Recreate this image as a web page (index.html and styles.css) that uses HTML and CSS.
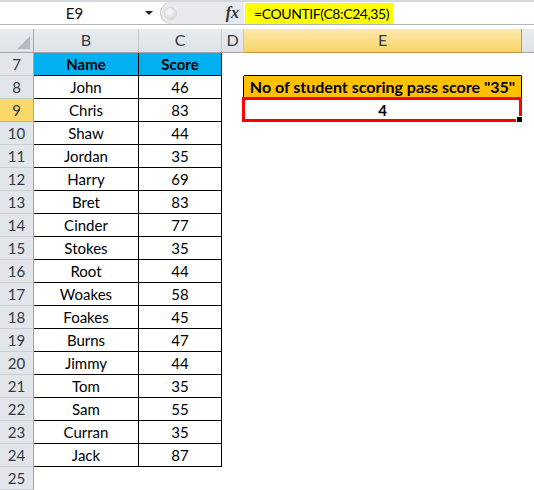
FILE: index.html
```html
<!DOCTYPE html>
<html lang="en">
  <head>
    <meta charset="UTF-8" />
    <title>COUNTIF</title>
    <link rel="stylesheet" href="styles.css">
  </head>
  <body>
    <div class="formula-bar">
      <div class="name-box">
        <span class="name">E9</span>
        <span class="arrow"></span>
      </div>
      <div class="fx-area">
        <span class="knob"></span>
        <span class="fx">fx</span>
      </div>
      <div class="formula"><span class="mark">=COUNTIF(C8:C24,35)</span></div>
    </div>

    <div class="sheet">
      <div class="hd corner"></div>
      <div class="hd col">B</div>
      <div class="hd col">C</div>
      <div class="hd col">D</div>
      <div class="hd col sel">E</div>
      <div class="hd col end"></div>

      <div class="hd row">7</div>
      <div class="c t head">Name</div>
      <div class="c t head">Score</div>
      <div class="c"></div>
      <div class="c line-b"></div>
      <div class="c"></div>

      <div class="hd row">8</div>
      <div class="c t">John</div>
      <div class="c t">46</div>
      <div class="c line-r"></div>
      <div class="c label">No of student scoring pass score "35"</div>
      <div class="c"></div>

      <div class="hd row sel">9</div>
      <div class="c t">Chris</div>
      <div class="c t">83</div>
      <div class="c"></div>
      <div class="c result">4<span class="select-box"></span></div>
      <div class="c"></div>

      <div class="hd row">10</div>
      <div class="c t">Shaw</div>
      <div class="c t">44</div>
      <div class="c"></div><div class="c"></div><div class="c"></div>

      <div class="hd row">11</div>
      <div class="c t">Jordan</div>
      <div class="c t">35</div>
      <div class="c"></div><div class="c"></div><div class="c"></div>

      <div class="hd row">12</div>
      <div class="c t">Harry</div>
      <div class="c t">69</div>
      <div class="c"></div><div class="c"></div><div class="c"></div>

      <div class="hd row">13</div>
      <div class="c t">Bret</div>
      <div class="c t">83</div>
      <div class="c"></div><div class="c"></div><div class="c"></div>

      <div class="hd row">14</div>
      <div class="c t">Cinder</div>
      <div class="c t">77</div>
      <div class="c"></div><div class="c"></div><div class="c"></div>

      <div class="hd row">15</div>
      <div class="c t">Stokes</div>
      <div class="c t">35</div>
      <div class="c"></div><div class="c"></div><div class="c"></div>

      <div class="hd row">16</div>
      <div class="c t">Root</div>
      <div class="c t">44</div>
      <div class="c"></div><div class="c"></div><div class="c"></div>

      <div class="hd row">17</div>
      <div class="c t">Woakes</div>
      <div class="c t">58</div>
      <div class="c"></div><div class="c"></div><div class="c"></div>

      <div class="hd row">18</div>
      <div class="c t">Foakes</div>
      <div class="c t">45</div>
      <div class="c"></div><div class="c"></div><div class="c"></div>

      <div class="hd row">19</div>
      <div class="c t">Burns</div>
      <div class="c t">47</div>
      <div class="c"></div><div class="c"></div><div class="c"></div>

      <div class="hd row">20</div>
      <div class="c t">Jimmy</div>
      <div class="c t">44</div>
      <div class="c"></div><div class="c"></div><div class="c"></div>

      <div class="hd row">21</div>
      <div class="c t">Tom</div>
      <div class="c t">35</div>
      <div class="c"></div><div class="c"></div><div class="c"></div>

      <div class="hd row">22</div>
      <div class="c t">Sam</div>
      <div class="c t">55</div>
      <div class="c"></div><div class="c"></div><div class="c"></div>

      <div class="hd row">23</div>
      <div class="c t">Curran</div>
      <div class="c t">35</div>
      <div class="c"></div><div class="c"></div><div class="c"></div>

      <div class="hd row">24</div>
      <div class="c t">Jack</div>
      <div class="c t">87</div>
      <div class="c"></div><div class="c"></div><div class="c"></div>

      <div class="hd row">25</div>
      <div class="c"></div><div class="c"></div>
      <div class="c"></div><div class="c"></div><div class="c"></div>
    </div>
  </body>
</html>
```

FILE: styles.css
```css
body {
  margin: 0;
  width: 534px;
  height: 490px;
  overflow: hidden;
  background-color: #fff;
  font-family: Lato, "Open Sans", sans-serif;
  font-size: 15px;
  color: #000;
}

/* formula bar */
.formula-bar {
  display: flex;
  height: 22px;
  border-top: 2px solid #d5d8dc;
  border-bottom: 1px solid #b4b8bd;
  margin-bottom: 4px;
}
.name-box {
  width: 157px;
  display: flex;
  align-items: center;
}
.name {
  flex: 1;
  text-align: center;
  padding-left: 4px;
  color: #111;
}
.arrow {
  width: 0;
  height: 0;
  margin-right: 4px;
  border-left: 4px solid transparent;
  border-right: 4px solid transparent;
  border-top: 4px solid #222;
}
.fx-area {
  width: 84px;
  margin-left: 3px;
  display: flex;
  align-items: center;
  justify-content: space-between;
  background-color: #e7e9ec;
  border-radius: 11px 0 0 11px;
  box-shadow: inset 1px 0 0 #c9ccd0;
}
.knob {
  width: 11px;
  height: 11px;
  margin-left: 5px;
  border-radius: 50%;
  background: radial-gradient(circle at 40% 35%, #fdfdfd, #c9ccd0);
  box-shadow: 0 0 0 1px #d3d6da;
}
.fx {
  margin-right: 5px;
  font-family: "Liberation Serif", serif;
  font-style: italic;
  font-weight: bold;
  font-size: 16px;
  color: #333;
}
.formula {
  flex: 1;
  display: flex;
  padding-top: 1px;
  padding-left: 1px;
}
.mark {
  background-color: #ffff00;
  padding: 0 4px 0 9px;
  font-size: 14px;
  letter-spacing: -0.4px;
  line-height: 21px;
}

/* sheet */
.sheet {
  display: grid;
  grid-template-columns: 34px 105px 83px 22px 278px 12px;
  grid-template-rows: 24px;
  grid-auto-rows: 23px;
}
.hd {
  box-sizing: border-box;
  background: linear-gradient(#e9ecf0, #dfe3e8);
  border-right: 1px solid #c3c8cf;
  border-bottom: 1px solid #9ea5ae;
  color: #333a44;
  text-align: center;
  line-height: 22px;
  font-size: 16px;
}
.corner {
  position: relative;
  border-right-color: #9ea5ae;
}
.corner::after {
  content: "";
  position: absolute;
  right: 3px;
  bottom: 3px;
  border-left: 13px solid transparent;
  border-bottom: 13px solid #b7bcc3;
}
.col.sel {
  background: linear-gradient(#fce9ab, #f9d467);
  border-right-color: #c99544;
  border-bottom-color: #c99544;
}
.col.end {
  border-right: none;
}
.row {
  background: #e2e5ea;
  border-right-color: #9ea5ae;
  border-bottom-color: #c9ced5;
  font-size: 15px;
}
.row.sel {
  background: #fcd86b;
  border-bottom-color: #e0a84a;
  border-right-color: #d49a3d;
}

.c {
  box-sizing: border-box;
  border-right: 1px solid transparent;
  border-bottom: 1px solid transparent;
  text-align: center;
  line-height: 22px;
}
.t {
  border-right-color: #000;
  border-bottom-color: #000;
}
.head {
  background-color: #00b0f0;
  font-weight: bold;
}
.line-b {
  border-bottom-color: #000;
}
.line-r {
  border-right-color: #000;
}
.label {
  background-color: #ffc000;
  border-right-color: #000;
  font-weight: bold;
  font-size: 16px;
  white-space: nowrap;
}
.result {
  position: relative;
  font-weight: bold;
}
.select-box {
  position: absolute;
  top: -2px;
  left: -2px;
  right: -1px;
  bottom: -1px;
  border: 3px solid #ff0000;
}
.select-box::after {
  content: "";
  position: absolute;
  right: -4px;
  bottom: -4px;
  width: 5px;
  height: 5px;
  background-color: #000;
  border: 1px solid #fff;
}
```
